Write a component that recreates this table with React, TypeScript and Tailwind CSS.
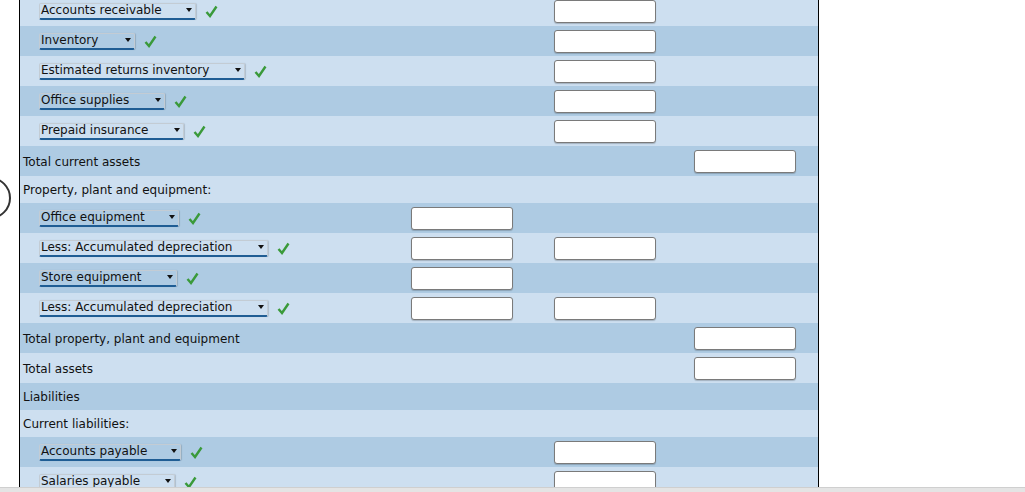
import React from "react";

type Row = {
  kind: "select" | "label";
  text: string;
  w?: number;
  dark: boolean;
  h: number;
  c1?: boolean;
  c2?: boolean;
  c3?: boolean;
};

const rows: Row[] = [
  { kind: "select", text: "Accounts receivable", w: 157, dark: false, h: 30, c2: true },
  { kind: "select", text: "Inventory", w: 96, dark: true, h: 30, c2: true },
  { kind: "select", text: "Estimated returns inventory", w: 206, dark: false, h: 30, c2: true },
  { kind: "select", text: "Office supplies", w: 126, dark: true, h: 30, c2: true },
  { kind: "select", text: "Prepaid insurance", w: 145, dark: false, h: 30, c2: true },
  { kind: "label", text: "Total current assets", dark: true, h: 30, c3: true },
  { kind: "label", text: "Property, plant and equipment:", dark: false, h: 27 },
  { kind: "select", text: "Office equipment", w: 140, dark: true, h: 30, c1: true },
  { kind: "select", text: "Less: Accumulated depreciation", w: 229, dark: false, h: 30, c1: true, c2: true },
  { kind: "select", text: "Store equipment", w: 138, dark: true, h: 30, c1: true },
  { kind: "select", text: "Less: Accumulated depreciation", w: 229, dark: false, h: 30, c1: true, c2: true },
  { kind: "label", text: "Total property, plant and equipment", dark: true, h: 30, c3: true },
  { kind: "label", text: "Total assets", dark: false, h: 30, c3: true },
  { kind: "label", text: "Liabilities", dark: true, h: 27 },
  { kind: "label", text: "Current liabilities:", dark: false, h: 27 },
  { kind: "select", text: "Accounts payable", w: 142, dark: true, h: 30, c2: true },
  { kind: "select", text: "Salaries payable", w: 136, dark: false, h: 30, c2: true },
];

function Check() {
  return (
    <svg width="13" height="13" viewBox="0 0 13 13" className="ml-[9px] shrink-0">
      <path d="M1.5 7 L5 11 L11.5 1.5" fill="none" stroke="#3a9a3a" strokeWidth="2.4" strokeLinejoin="miter" />
    </svg>
  );
}

function Input() {
  return (
    <div className="w-[102px] h-[23px] rounded-[3px] border border-[#7a7a7a] bg-white shadow-[0_1px_1px_rgba(0,0,0,0.2)]" />
  );
}

function Select({ text, w }: { text: string; w: number }) {
  return (
    <div className="flex items-center">
      <div
        className="flex items-center justify-between h-[17px] border border-[#c3ccd4] border-b-2 border-b-[#1f5d94] rounded-[2px] pl-[1px] pr-[2px] pb-[1px] text-[12px] leading-none text-[#111] shadow-[1px_0_1px_rgba(0,0,0,0.15)]"
        style={{ width: w }}
      >
        <span>{text}</span>
        <span className="w-0 h-0 border-l-[3px] border-r-[3px] border-t-[4px] border-l-transparent border-r-transparent border-t-[#111] mr-[1px]" />
      </div>
      <Check />
    </div>
  );
}

export default function App() {
  return (
    <div
      className="relative w-[1025px] h-[492px] overflow-hidden bg-white flex flex-col"
      style={{ fontFamily: '"DejaVu Sans", Verdana, sans-serif' }}
    >
      <div className="flex-1 overflow-hidden">
        <div className="ml-[19px] w-[800px] border-x border-black -mt-[4px]">
          {rows.map((r, i) => (
            <div
              key={i}
              className={`grid grid-cols-[391px_143px_140px_1fr] items-center ${r.dark ? "bg-[#aecbe3]" : "bg-[#cddff0]"}`}
              style={{ height: r.h }}
            >
              <div className={r.kind === "select" ? "pl-[19px]" : "pl-[3px] pt-[1px] text-[12px] text-[#111]"}>
                {r.kind === "select" ? <Select text={r.text} w={r.w!} /> : r.text}
              </div>
              <div>{r.c1 && <Input />}</div>
              <div>{r.c2 && <Input />}</div>
              <div>{r.c3 && <Input />}</div>
            </div>
          ))}
        </div>
      </div>
      <div className="h-[5px] bg-[#e4e4e4] border-t border-[#cfcfcf]" />
      <div className="absolute left-[-31px] top-[177px] w-[42px] h-[42px] rounded-full border-2 border-[#333]" />
    </div>
  );
}
